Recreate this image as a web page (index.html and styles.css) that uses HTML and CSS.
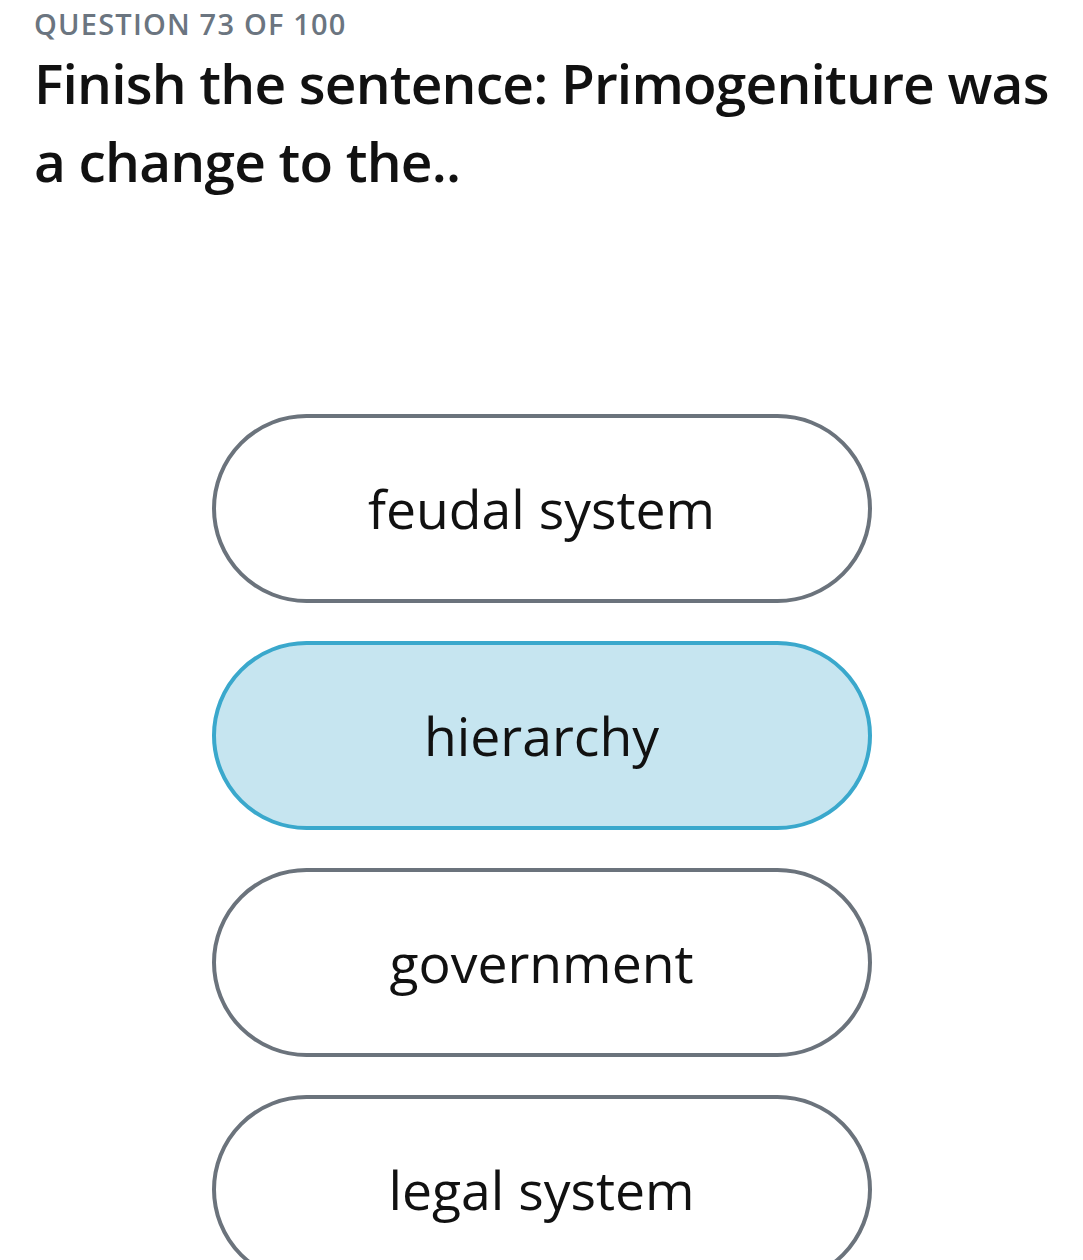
FILE: index.html
```html
<!DOCTYPE html>
<html lang="en">
<head>
  <meta charset="UTF-8">
  <meta name="viewport" content="width=device-width, initial-scale=1.0">
  <title>Question 73</title>
  <link rel="stylesheet" href="styles.css">
</head>
<body>
  <div class="quiz">
    <div class="counter">QUESTION 73 OF 100</div>
    <h1 class="question">Finish the sentence: Primogeniture was a change to the..</h1>

    <div class="answers">
      <button class="answer">feudal system</button>
      <button class="answer selected">hierarchy</button>
      <button class="answer">government</button>
      <button class="answer">legal system</button>
    </div>
  </div>
</body>
</html>
```

FILE: styles.css
```css
body {
  font-family: "Open Sans", Arial, sans-serif;
  background-color: #ffffff;
  color: #111111;
  margin: 0;
  padding: 0;
}
.quiz {
  padding: 4px 0 0 34px;
}
.counter {
  font-size: 29px;
  line-height: 40px;
  font-weight: 600;
  letter-spacing: 1.2px;
  color: #6b7580;
}
.question {
  font-size: 55px;
  line-height: 78px;
  font-weight: 600;
  letter-spacing: -0.8px;
  margin: 0;
}
.answers {
  display: flex;
  flex-direction: column;
  align-items: center;
  gap: 38px;
  margin-top: 214px;
  margin-left: -34px;
}
.answer {
  box-sizing: border-box;
  width: 660px;
  height: 189px;
  border: 4px solid #6b737c;
  border-radius: 95px;
  background: #ffffff;
  font-family: "Open Sans", Arial, sans-serif;
  font-size: 53.5px;
  color: #111111;
  cursor: pointer;
}
.answer.selected {
  background-color: #c6e5f0;
  border-color: #3aa8cc;
}
```
